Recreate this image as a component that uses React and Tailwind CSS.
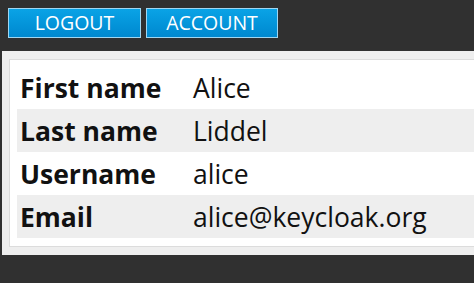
import React from 'react';

const ROWS = [
  ['First name', 'Alice'],
  ['Last name', 'Liddel'],
  ['Username', 'alice'],
  ['Email', 'alice@keycloak.org'],
];

const App = () => {
  return (
    <div className="min-h-screen w-[474px] h-[283px] overflow-hidden bg-[#303030] font-['Open_Sans','Noto_Sans',sans-serif]">
      {/* Top buttons */}
      <div className="flex gap-[5px] pl-[8px] pt-[8px]">
        <button className="w-[133px] h-[30px] bg-gradient-to-b from-[#0aa3e6] to-[#0088cf] border border-[#9fd6f2] text-white text-[19.5px] leading-none">
          LOGOUT
        </button>
        <button className="w-[132px] h-[30px] bg-gradient-to-b from-[#0aa3e6] to-[#0088cf] border border-[#9fd6f2] text-white text-[19.5px] leading-none">
          ACCOUNT
        </button>
      </div>

      {/* Panel */}
      <div className="mt-[13px] ml-[2px] bg-[#eeeeee] pl-[7px] pt-[8px] pb-[8px] h-[204px]">
        <div className="bg-white border border-[#dcdcdc] border-r-0 h-[188px] pl-[7px] pt-[6px]">
          {ROWS.map(([label, value], i) => (
            <div
              key={label}
              className={`flex items-center h-[43px] pt-[3px] text-[26.5px] text-[#111] ${i % 2 === 1 ? 'bg-[#eeeeee]' : 'bg-white'}`}
            >
              <span className="w-[176px] pl-[3px] font-bold">{label}</span>
              <span>{value}</span>
            </div>
          ))}
        </div>
      </div>
    </div>
  );
};

export default App;
